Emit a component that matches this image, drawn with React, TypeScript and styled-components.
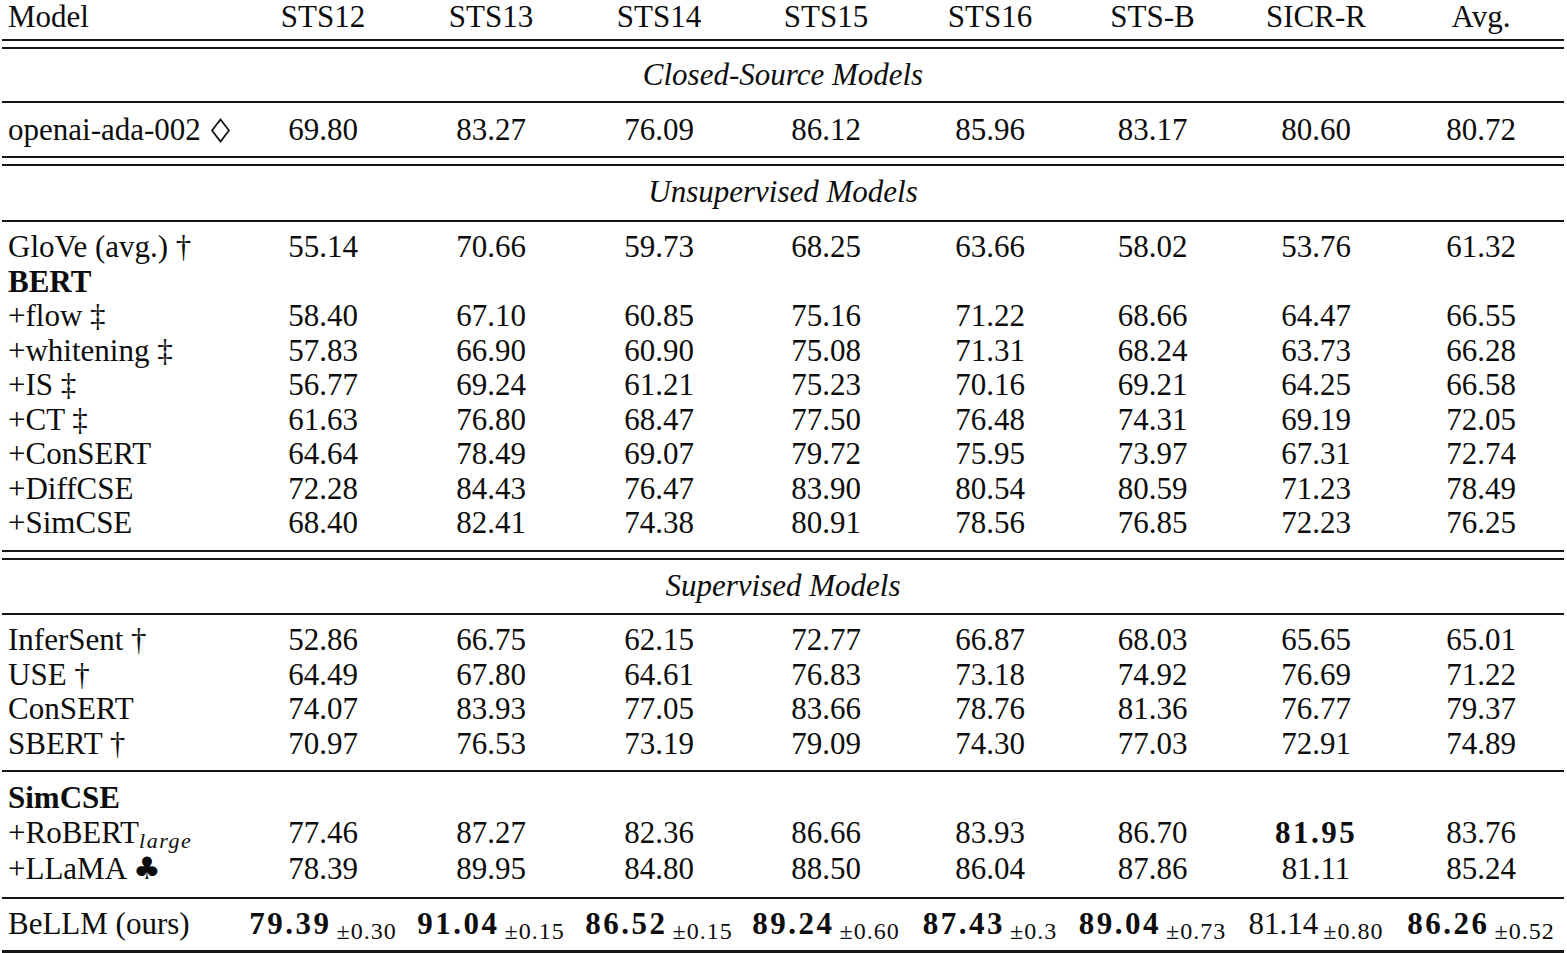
import styled, { createGlobalStyle } from 'styled-components';

const GlobalStyle = createGlobalStyle`
    html, body {
        margin: 0;
        padding: 0;
        background: #ffffff;
    }
    body {
        width: 1567px;
        height: 953px;
        overflow: hidden;
    }
`;

const COLUMNS = '237px 168px 168px 168px 166px 162px 163px 164px 166px';

const Table = styled.div`
    width: 1562px;
    margin-left: 2px;
    font-family: "Liberation Serif", "Times New Roman", serif;
    font-size: 31px;
    color: #0d0d0d;
`;

const Grid = styled.div<{ $pt: number; $pb: number; $lh?: number }>`
    display: grid;
    grid-template-columns: ${COLUMNS};
    line-height: ${p => p.$lh ?? 34.5}px;
    padding-top: ${p => p.$pt}px;
    padding-bottom: ${p => p.$pb}px;
`;

const NameCell = styled.div<{ $bold?: boolean; $full?: boolean }>`
    padding-left: 6px;
    white-space: nowrap;
    font-weight: ${p => (p.$bold ? 700 : 400)};
    grid-column: ${p => (p.$full ? '1 / -1' : 'auto')};
`;

const ValueCell = styled.div`
    text-align: center;
    white-space: nowrap;
`;

const BoldNum = styled.span`
    font-weight: 700;
    letter-spacing: 2.5px;
`;

const PlusMinus = styled.span`
    font-size: 24px;
    line-height: 1;
    letter-spacing: 1px;
    vertical-align: -5px;
    margin-left: 5px;
`;

const Sub = styled.span`
    font-size: 22px;
    font-style: italic;
    letter-spacing: 1.5px;
    line-height: 1;
    vertical-align: -5px;
`;

const Club = styled.span`
    font-family: "DejaVu Sans", sans-serif;
    font-size: 31px;
    line-height: 1;
`;

const DiamondIcon = styled.svg`
    width: 21px;
    height: 25px;
    vertical-align: -3px;
    margin-left: 1px;
`;

const SectionTitle = styled.div<{ $pt: number; $pb: number }>`
    font-style: italic;
    text-align: center;
    line-height: 34.5px;
    padding-top: ${p => p.$pt}px;
    padding-bottom: ${p => p.$pb}px;
`;

const Rule = styled.div<{ $h?: number }>`
    height: ${p => p.$h ?? 2}px;
    background: #161616;
`;

const DoubleRule = styled.div`
    box-sizing: border-box;
    height: 10px;
    border-top: 2px solid #161616;
    border-bottom: 2px solid #161616;
`;

type Cell = { v: string; b?: boolean; pm?: string };

type Row = {
    name: React.ReactNode;
    bold?: boolean;
    cells?: Cell[];
};

const headers = ['STS12', 'STS13', 'STS14', 'STS15', 'STS16', 'STS-B', 'SICR-R', 'Avg.'];

const plain = (...vals: string[]): Cell[] => vals.map(v => ({ v }));

function Diamond() {
    return (
        <DiamondIcon viewBox="0 0 21 25">
            <path d="M10.5 1.5 L19 12.5 L10.5 23.5 L2 12.5 Z" fill="none" stroke="#111" strokeWidth="1.7" strokeLinejoin="miter" />
        </DiamondIcon>
    );
}

const closedRows: Row[] = [
    {
        name: <>openai-ada-002 <Diamond /></>,
        cells: plain('69.80', '83.27', '76.09', '86.12', '85.96', '83.17', '80.60', '80.72'),
    },
];

const unsupRows: Row[] = [
    { name: 'GloVe (avg.) †', cells: plain('55.14', '70.66', '59.73', '68.25', '63.66', '58.02', '53.76', '61.32') },
    { name: 'BERT', bold: true },
    { name: '+flow ‡', cells: plain('58.40', '67.10', '60.85', '75.16', '71.22', '68.66', '64.47', '66.55') },
    { name: '+whitening ‡', cells: plain('57.83', '66.90', '60.90', '75.08', '71.31', '68.24', '63.73', '66.28') },
    { name: '+IS ‡', cells: plain('56.77', '69.24', '61.21', '75.23', '70.16', '69.21', '64.25', '66.58') },
    { name: '+CT ‡', cells: plain('61.63', '76.80', '68.47', '77.50', '76.48', '74.31', '69.19', '72.05') },
    { name: '+ConSERT', cells: plain('64.64', '78.49', '69.07', '79.72', '75.95', '73.97', '67.31', '72.74') },
    { name: '+DiffCSE', cells: plain('72.28', '84.43', '76.47', '83.90', '80.54', '80.59', '71.23', '78.49') },
    { name: '+SimCSE', cells: plain('68.40', '82.41', '74.38', '80.91', '78.56', '76.85', '72.23', '76.25') },
];

const supRows: Row[] = [
    { name: 'InferSent †', cells: plain('52.86', '66.75', '62.15', '72.77', '66.87', '68.03', '65.65', '65.01') },
    { name: 'USE †', cells: plain('64.49', '67.80', '64.61', '76.83', '73.18', '74.92', '76.69', '71.22') },
    { name: 'ConSERT', cells: plain('74.07', '83.93', '77.05', '83.66', '78.76', '81.36', '76.77', '79.37') },
    { name: 'SBERT †', cells: plain('70.97', '76.53', '73.19', '79.09', '74.30', '77.03', '72.91', '74.89') },
];

const simcseRows: Row[] = [
    { name: 'SimCSE', bold: true },
    {
        name: <>+RoBERT<Sub>large</Sub></>,
        cells: [
            { v: '77.46' }, { v: '87.27' }, { v: '82.36' }, { v: '86.66' },
            { v: '83.93' }, { v: '86.70' }, { v: '81.95', b: true }, { v: '83.76' },
        ],
    },
    {
        name: <>+LLaMA <Club>♣</Club></>,
        cells: plain('78.39', '89.95', '84.80', '88.50', '86.04', '87.86', '81.11', '85.24'),
    },
];

const oursRows: Row[] = [
    {
        name: 'BeLLM (ours)',
        cells: [
            { v: '79.39', b: true, pm: '0.30' },
            { v: '91.04', b: true, pm: '0.15' },
            { v: '86.52', b: true, pm: '0.15' },
            { v: '89.24', b: true, pm: '0.60' },
            { v: '87.43', b: true, pm: '0.3' },
            { v: '89.04', b: true, pm: '0.73' },
            { v: '81.14', pm: '0.80' },
            { v: '86.26', b: true, pm: '0.52' },
        ],
    },
];

function Rows({ rows, pt, pb }: { rows: Row[]; pt: number; pb: number }) {
    return (
        <Grid $pt={pt} $pb={pb}>
            {rows.map((row, i) => (
                <RowCells key={i} row={row} />
            ))}
        </Grid>
    );
}

function RowCells({ row }: { row: Row }) {
    if (!row.cells) {
        return <NameCell $bold={row.bold} $full>{row.name}</NameCell>;
    }
    return (
        <>
            <NameCell $bold={row.bold}>{row.name}</NameCell>
            {row.cells.map((c, j) => (
                <ValueCell key={j}>
                    {c.b ? <BoldNum>{c.v}</BoldNum> : c.v}
                    {c.pm && <PlusMinus>±{c.pm}</PlusMinus>}
                </ValueCell>
            ))}
        </>
    );
}

export default function App() {
    return (
        <>
            <GlobalStyle />
            <Table>
                <Grid $pt={0} $pb={4.5}>
                    <NameCell>Model</NameCell>
                    {headers.map(h => (
                        <ValueCell key={h}>{h}</ValueCell>
                    ))}
                </Grid>
                <DoubleRule />
                <SectionTitle $pt={9} $pb={8.5}>Closed-Source Models</SectionTitle>
                <Rule />
                <Rows rows={closedRows} pt={10} pb={8.5} />
                <DoubleRule />
                <SectionTitle $pt={9} $pb={10.5}>Unsupervised Models</SectionTitle>
                <Rule />
                <Rows rows={unsupRows} pt={8} pb={9.5} />
                <DoubleRule />
                <SectionTitle $pt={9} $pb={9.5}>Supervised Models</SectionTitle>
                <Rule />
                <Rows rows={supRows} pt={8} pb={9} />
                <Rule />
                <Rows rows={simcseRows} pt={9} pb={10.5} />
                <Rule />
                <Rows rows={oursRows} pt={8} pb={7.5} />
                <Rule $h={4} />
            </Table>
        </>
    );
}
